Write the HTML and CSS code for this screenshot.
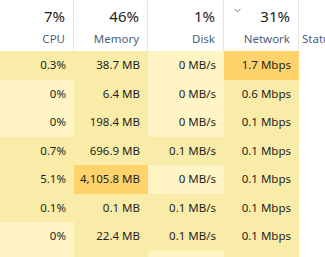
FILE: index.html
```html
<!DOCTYPE html>
<html lang="en">
<head>
    <meta charset="UTF-8">
    <title>Processes</title>
    <link rel="stylesheet" href="styles.css">
</head>
<body>
    <div class="grid">
        <div class="head"><div class="pct">7%</div><div class="label">CPU</div></div>
        <div class="head"><div class="pct">46%</div><div class="label">Memory</div></div>
        <div class="head"><div class="pct">1%</div><div class="label">Disk</div></div>
        <div class="head sorted">
            <div class="pct">
                <svg class="chev" width="7" height="5" viewBox="0 0 7 5"><polyline points="0.5,0.8 3.5,3.8 6.5,0.8" fill="none" stroke="#7a7a7a" stroke-width="1"/></svg>
                <span>31%</span>
            </div>
            <div class="label">Network</div>
        </div>
        <div class="head status"><div class="pct">&nbsp;</div><div class="label">Status</div></div>
    </div>

    <div id="rows" class="grid"></div>

    <script>
        const rows = [
            ["0.3%", 1, "38.7 MB", 1, "0 MB/s", 0, "1.7 Mbps", 2],
            ["0%", 0, "6.4 MB", 1, "0 MB/s", 0, "0.6 Mbps", 1],
            ["0%", 0, "198.4 MB", 1, "0 MB/s", 0, "0.1 Mbps", 1],
            ["0.7%", 1, "696.9 MB", 1, "0.1 MB/s", 1, "0.1 Mbps", 1],
            ["5.1%", 1, "4,105.8 MB", 2, "0 MB/s", 0, "0.1 Mbps", 1],
            ["0.1%", 1, "0.1 MB", 1, "0.1 MB/s", 1, "0.1 Mbps", 1],
            ["0%", 0, "22.4 MB", 1, "0.1 MB/s", 1, "0.1 Mbps", 1],
            ["", 0, "", 1, "", 0, "", 1]
        ];
        const box = document.getElementById("rows");
        rows.forEach(function (r) {
            for (let i = 0; i < r.length; i += 2) {
                const cell = document.createElement("div");
                cell.className = "cell heat" + r[i + 1];
                cell.textContent = r[i];
                box.appendChild(cell);
            }
            const st = document.createElement("div");
            st.className = "cell blank";
            box.appendChild(st);
        });
    </script>
</body>
</html>
```
FILE: styles.css
```css
body {
    margin: 0;
    background: #fff;
    font-family: "Noto Sans", "Open Sans", sans-serif;
    color: #1f1f1f;
    overflow: hidden;
}

.grid {
    display: grid;
    grid-template-columns: 74px 74px 76px 75px 1fr;
}

/* header */
.head {
    height: 51px;
    box-sizing: border-box;
    border-right: 1px solid #e5e5e5;
    padding: 6px 8px 0 0;
    text-align: right;
    white-space: nowrap;
    overflow: hidden;
}

.head .pct {
    font-size: 15px;
    line-height: 20px;
    color: #1e1e1e;
}

.head .label {
    margin-top: 5px;
    font-size: 11.5px;
    line-height: 16px;
    color: #4c607a;
}

.sorted .pct {
    display: flex;
    justify-content: space-between;
    align-items: flex-start;
    padding-left: 10px;
}

.sorted .chev {
    margin-top: 2px;
}

.head.status {
    border-right: none;
    text-align: left;
    padding-left: 3px;
}

/* rows */
.cell {
    height: 28.5px;
    line-height: 28.5px;
    font-size: 11.5px;
    text-align: right;
    padding-right: 8px;
    white-space: nowrap;
}

.heat0 { background: #fff4c4; }
.heat1 { background: #f9eca8; }
.heat2 { background: #ffd36b; }
.blank { background: #fff; }
```
